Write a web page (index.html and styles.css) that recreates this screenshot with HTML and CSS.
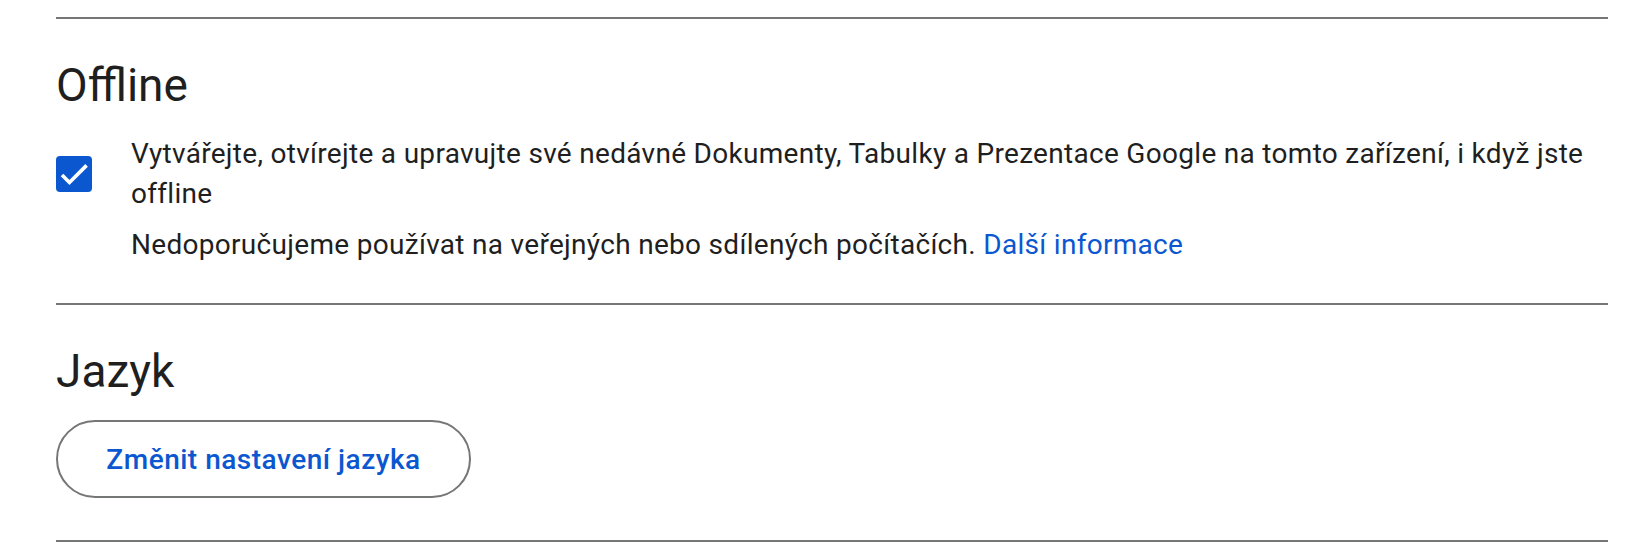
FILE: index.html
```html
<!DOCTYPE html>
<html lang="cs">
<head>
<meta charset="utf-8">
<title>Nastavení</title>
<link rel="stylesheet" href="styles.css">
</head>
<body>
<main class="settings">
  <hr class="divider">
  <section class="section section-offline">
    <h2 class="section-title">Offline</h2>
    <div class="option">
      <span class="checkbox" role="checkbox" aria-checked="true">
        <svg viewBox="0 0 24 24" aria-hidden="true"><path d="M1.73 12.91L8.1 19.28L22.79 4.59" fill="none" stroke="#fff" stroke-width="3.12"/></svg>
      </span>
      <p class="option-label">Vytvářejte, otvírejte a upravujte své nedávné Dokumenty, Tabulky a Prezentace Google na tomto zařízení, i když jste offline</p>
      <p class="option-note">Nedoporučujeme používat na veřejných nebo sdílených počítačích. <a class="link" href="#">Další informace</a></p>
    </div>
  </section>
  <hr class="divider">
  <section class="section section-language">
    <h2 class="section-title">Jazyk</h2>
    <button class="outline-btn" type="button">Změnit nastavení jazyka</button>
  </section>
  <hr class="divider">
</main>
</body>
</html>
```
FILE: styles.css
```css
html, body {
  margin: 0;
  padding: 0;
  background: #ffffff;
}

body {
  font-family: Roboto, "Liberation Sans", sans-serif;
  color: #1f1f1f;
}

.settings {
  width: 1552px;
  margin-left: 56px;
  padding-top: 17px;
}

.divider {
  margin: 0;
  border: 0;
  height: 2px;
  background: #747775;
}

.section {
  padding: 40px 0 40px;
}

.section-offline {
  padding-bottom: 38px;
}

.section-language {
  padding-bottom: 42px;
}

.section-title {
  margin: 0 0 23px;
  font-size: 46px;
  line-height: 52px;
  font-weight: 400;
  color: #1f1f1f;
}

.option {
  display: grid;
  grid-template-columns: 36px 1fr;
  column-gap: 39px;
  row-gap: 11px;
  align-items: center;
}

.checkbox {
  grid-column: 1;
  grid-row: 1;
  width: 36px;
  height: 36px;
  border-radius: 4px;
  background: #0b57d0;
  display: flex;
  align-items: center;
  justify-content: center;
}

.checkbox svg {
  display: block;
  width: 28px;
  height: 28px;
}

.option-label,
.option-note {
  grid-column: 2;
  margin: 0;
  font-size: 28px;
  line-height: 40px;
  letter-spacing: 0.3px;
  color: #1f1f1f;
}

.option-label {
  grid-row: 1;
}

.option-note {
  grid-row: 2;
}

.link {
  color: #0b57d0;
  text-decoration: none;
}

.outline-btn {
  display: block;
  width: 415px;
  height: 78px;
  margin: 0;
  padding: 0;
  border: 2px solid #747775;
  border-radius: 39px;
  background: #ffffff;
  color: #0b57d0;
  font-family: Roboto, "Liberation Sans", sans-serif;
  font-size: 28px;
  font-weight: 500;
  letter-spacing: 0.5px;
  cursor: pointer;
}
```
